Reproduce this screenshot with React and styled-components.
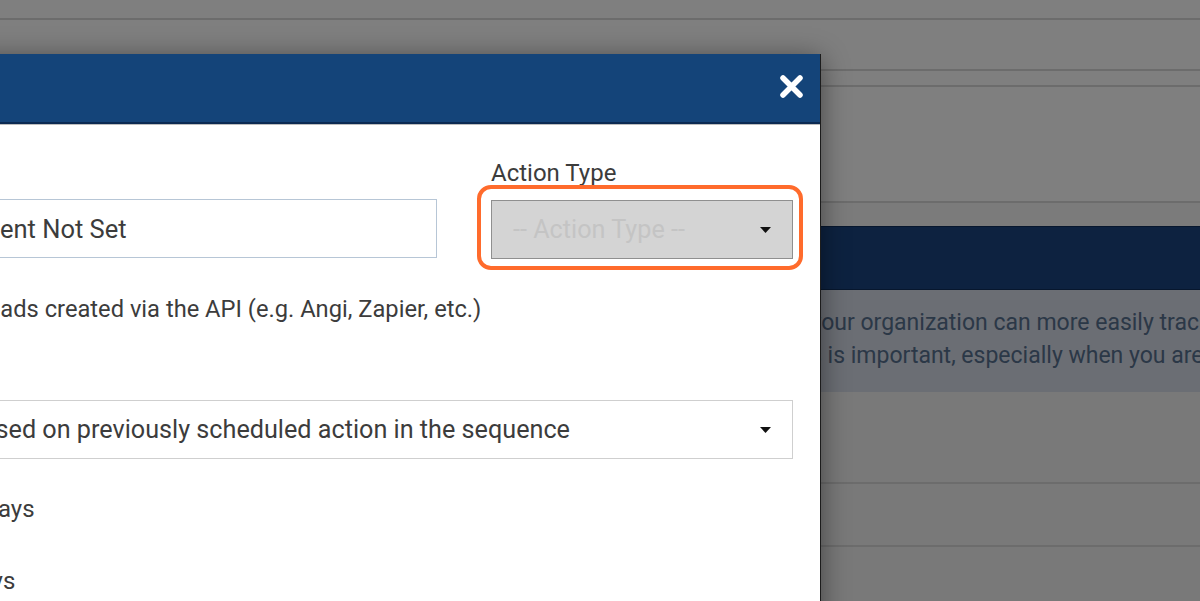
import React from "react";
import styled, { createGlobalStyle } from "styled-components";

const GlobalStyle = createGlobalStyle`
  html, body {
    margin: 0;
    padding: 0;
  }
  body {
    width: 1200px;
    height: 601px;
    overflow: hidden;
    background: #ffffff;
    font-family: Roboto, "Liberation Sans", Arial, sans-serif;
  }
`;

export default function App() {
  return (
    <>
      <GlobalStyle />
      <Screen>
        <Page>
          <Band h={18} line />
          <Band h={49} line />
          <Band h={14} line />
          <Band h={114} line />
          <Band h={23} bg="#f6f6f6" />
          <NavyBar />
          <InfoBox>
            <InfoText>So your organization can more easily track where every lead comes from.</InfoText>
            <InfoText>This is important, especially when you are running several campaigns.</InfoText>
          </InfoBox>
          <Band h={90} line bg="#f2f2f2" />
          <Band h={61} line bg="#f2f2f2" />
          <Band h={60} bg="#f2f2f2" />
        </Page>

        <Overlay />

        <Modal>
          <Header>
            <CloseButton aria-label="Close">
              <svg width="25" height="25" viewBox="0 0 25 25">
                <path
                  d="M4 4 L21 21 M21 4 L4 21"
                  stroke="#ffffff"
                  strokeWidth="5.5"
                  strokeLinecap="round"
                  fill="none"
                />
              </svg>
            </CloseButton>
          </Header>
          <Body>
            <FormGrid>
              <Field>
                <Label>Assignee</Label>
                <TextInput>Assignment Not Set</TextInput>
              </Field>
              <Field>
                <Label>Action Type</Label>
                <Highlight>
                  <Select disabled>
                    <Placeholder>-- Action Type --</Placeholder>
                    <Caret />
                  </Select>
                </Highlight>
              </Field>
              <Help>Used for leads created via the API (e.g. Angi, Zapier, etc.)</Help>
              <Field wide>
                <Label top={37}>Timing</Label>
                <Select>
                  <Value>Delay based on previously scheduled action in the sequence</Value>
                  <Caret />
                </Select>
              </Field>
              <Option top={36}>Delay 14 days</Option>
              <Option top={44}>After 7 days</Option>
            </FormGrid>
          </Body>
        </Modal>
      </Screen>
    </>
  );
}

function Caret() {
  return (
    <CaretIcon width="11" height="6" viewBox="0 0 11 6">
      <path d="M0 0 H11 L5.5 6 Z" fill="#111111" />
    </CaretIcon>
  );
}

const Screen = styled.div`
  position: relative;
  width: 1200px;
  height: 601px;
  overflow: hidden;
  background: #ffffff;
`;

const Page = styled.div`
  display: flex;
  flex-direction: column;
`;

const Band = styled.div`
  height: ${(p) => p.h}px;
  flex-shrink: 0;
  background: ${(p) => p.bg || "transparent"};
  border-bottom: ${(p) => (p.line ? "2px solid #d9d9d9" : "none")};
`;

const NavyBar = styled.div`
  height: 62px;
  flex-shrink: 0;
  background: #1a4480;
  border-top: 1px solid #0f2f5c;
  border-bottom: 1px solid #0f2f5c;
`;

const InfoBox = styled.div`
  height: 102px;
  flex-shrink: 0;
  box-sizing: border-box;
  padding: 16px 0 0 778px;
  background: #d6dce8;
  overflow: hidden;
`;

const InfoText = styled.div`
  font-size: 23px;
  line-height: 33px;
  color: #56708f;
  white-space: nowrap;
`;

const Overlay = styled.div`
  position: absolute;
  inset: 0;
  background: rgba(0, 0, 0, 0.5);
`;

const Modal = styled.div`
  position: absolute;
  top: 54px;
  left: -140px;
  width: 960px;
  height: 620px;
  background: #ffffff;
  border-right: 1px solid #1c1c1c;
  box-shadow: 0 4px 26px rgba(0, 0, 0, 0.45);
`;

const Header = styled.div`
  height: 70px;
  display: flex;
  align-items: center;
  justify-content: flex-end;
  padding: 0 16px 4px 0;
  box-sizing: border-box;
  background: #144479;
  border-bottom: 2px solid #0b2a52;
`;

const CloseButton = styled.button`
  display: flex;
  padding: 0;
  border: none;
  background: none;
  cursor: pointer;
`;

const Body = styled.div`
  border-top: 1px solid #bdbdbd;
  padding: 34px 27px 0 27px;
`;

const FormGrid = styled.div`
  display: grid;
  grid-template-columns: 1fr 302px;
  column-gap: 54px;
  font-size: 24px;
  color: #3c3c3c;
`;

const Field = styled.div`
  display: flex;
  flex-direction: column;
  grid-column: ${(p) => (p.wide ? "1 / -1" : "auto")};
`;

const Label = styled.div`
  height: 28px;
  line-height: 28px;
  margin: ${(p) => p.top || 0}px 0 12px;
  color: #3c3c3c;
  white-space: nowrap;
`;

const TextInput = styled.div`
  height: 59px;
  box-sizing: border-box;
  display: flex;
  align-items: center;
  padding: 0 12px;
  border: 1px solid #b7c6d6;
  background: #ffffff;
  font-size: 25.5px;
  white-space: nowrap;
`;

const Highlight = styled.div`
  position: relative;
  &::after {
    content: "";
    position: absolute;
    inset: -14px -10px -11px -14px;
    border: 4px solid #ff6b2c;
    border-radius: 14px;
    pointer-events: none;
  }
`;

const Select = styled.div`
  height: 59px;
  box-sizing: border-box;
  display: flex;
  align-items: center;
  justify-content: space-between;
  padding: 0 21px 0 12px;
  border: 1px solid ${(p) => (p.disabled ? "#8f8f8f" : "#cfcfcf")};
  background: ${(p) => (p.disabled ? "#d4d4d4" : "#ffffff")};
  margin-top: ${(p) => (p.disabled ? "1px" : "0")};
  font-size: 25.2px;
`;

const Placeholder = styled.span`
  padding-left: 9px;
  color: #c4c4c4;
  white-space: nowrap;
`;

const Value = styled.span`
  white-space: nowrap;
`;

const CaretIcon = styled.svg`
  flex-shrink: 0;
`;

const Help = styled.div`
  grid-column: 1 / -1;
  margin-top: 36px;
  line-height: 28px;
  font-size: 23.7px;
  white-space: nowrap;
`;

const Option = styled.div`
  grid-column: 1 / -1;
  margin-top: ${(p) => p.top}px;
  line-height: 28px;
  white-space: nowrap;
`;
